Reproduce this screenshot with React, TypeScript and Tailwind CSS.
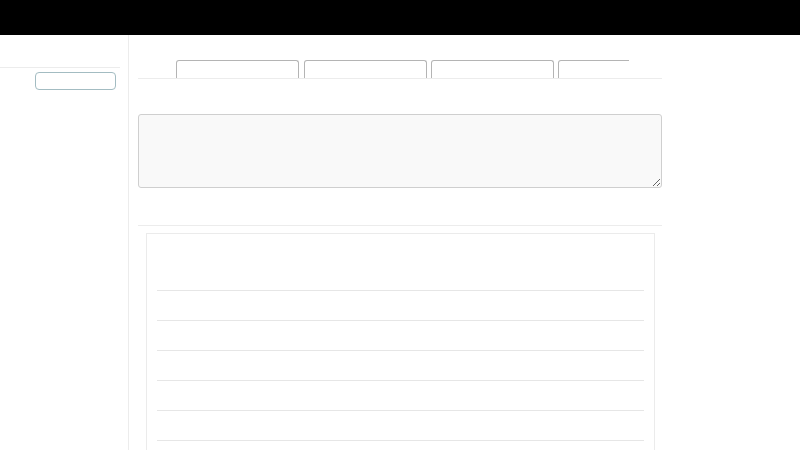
import React from 'react';

const rows = [0, 1, 2, 3, 4, 5, 6];

export default function App() {
  return (
    <div className="h-[450px] w-[800px] overflow-hidden bg-white font-['Liberation_Sans',sans-serif]">
      {/* Top bar */}
      <div className="h-[35px] bg-black" />

      <div className="flex h-[415px]">
        {/* Sidebar */}
        <aside className="w-[129px] shrink-0 border-r border-[#ececec]">
          <div className="mt-[32px] mr-[8px] h-px bg-[#ececec]" />
          <button className="mt-[4px] ml-[35px] block h-[18px] w-[81px] rounded-[4px] border border-[#a3bcc2] bg-white" />
        </aside>

        {/* Main */}
        <main className="w-[533px] pl-[9px]">
          {/* Tabs */}
          <div className="mt-[25px] border-b border-[#ececec]">
            <div className="ml-[38px] flex h-[18px] w-[453px] overflow-hidden">
              <div className="h-[18px] w-[123px] shrink-0 rounded-t-[3px] border border-b-0 border-[#b4b4b4] bg-white" />
              <div className="ml-[5px] h-[18px] w-[123px] shrink-0 rounded-t-[3px] border border-b-0 border-[#b4b4b4] bg-white" />
              <div className="ml-[4px] h-[18px] w-[123px] shrink-0 rounded-t-[3px] border border-b-0 border-[#b4b4b4] bg-white" />
              <div className="ml-[4px] h-[18px] w-[123px] shrink-0 rounded-t-[3px] border border-b-0 border-[#b4b4b4] bg-white" />
            </div>
          </div>

          {/* Editor */}
          <textarea className="mt-[35px] block h-[74px] w-[524px] rounded-[3px] border border-[#cfcfcf] bg-[#f9f9f9] outline-none" />

          <div className="mt-[37px] h-px bg-[#ececec]" />

          {/* List panel */}
          <div className="mt-[7px] ml-[8px] h-[230px] w-[509px] border border-[#ebebeb] pt-[56px] pl-[10px] pr-[10px]">
            {rows.map((r) => (
              <div key={r} className="h-[30px] border-t border-[#e6e6e6]" />
            ))}
          </div>
        </main>
      </div>
    </div>
  );
}
